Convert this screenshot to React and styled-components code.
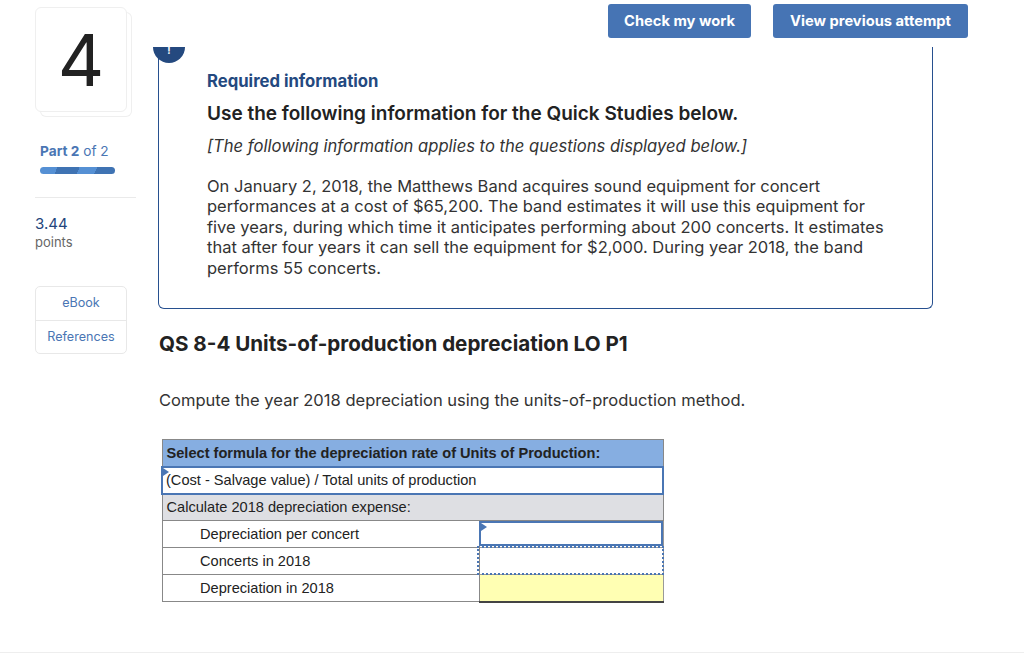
import React from "react";
import styled, { createGlobalStyle } from "styled-components";

const GlobalStyle = createGlobalStyle`
  html, body {
    margin: 0;
    padding: 0;
    background: #fff;
    overflow: hidden;
  }
  body {
    font-family: Inter, "Open Sans", sans-serif;
    color: #2b2b2b;
  }
`;

const Page = styled.div`
  display: flex;
  height: 653px;
  width: 1024px;
  box-sizing: border-box;
  border-bottom: 1px solid #eeeeee;
`;

const Sidebar = styled.aside`
  width: 101px;
  margin-left: 35px;
  padding-top: 7px;
  flex-shrink: 0;
`;

const NumberCard = styled.div`
  width: 92px;
  height: 105px;
  box-sizing: border-box;
  border: 1px solid #efefef;
  border-radius: 6px;
  background: #fff;
  display: flex;
  justify-content: center;
  font-size: 72px;
  line-height: 103px;
  font-weight: 400;
  color: #222;
  box-shadow: 5px 5px 0 -1px #fff, 5px 5px 0 0 #efefef;
`;

const PartLabel = styled.div`
  margin: 30px 0 0 5px;
  font-size: 13.7px;
  line-height: 18px;
  color: #4a76b4;
  b {
    font-weight: 700;
  }
`;

const Progress = styled.div`
  margin: 7px 0 0 5px;
  width: 75px;
  height: 7px;
  border-radius: 4px;
  background: repeating-linear-gradient(
    115deg,
    #5590d4 0 16px,
    #3f73b3 16px 36px
  );
`;

const Divider = styled.hr`
  margin: 23px 0 0;
  border: 0;
  border-top: 1px solid #eaeaea;
`;

const Score = styled.div`
  margin-top: 17px;
  font-size: 15px;
  line-height: 18px;
  color: #24457c;
`;

const ScoreLabel = styled.div`
  font-size: 13px;
  line-height: 18px;
  color: #666;
`;

const ToolGroup = styled.div`
  margin-top: 35px;
  width: 92px;
  box-sizing: border-box;
  border: 1px solid #e8e8e8;
  border-radius: 5px;
`;

const ToolLink = styled.div`
  height: 33px;
  box-sizing: border-box;
  line-height: 32px;
  text-align: center;
  font-size: 12.6px;
  color: #4a76b4;
  & + & {
    border-top: 1px solid #e8e8e8;
  }
`;

const Main = styled.main`
  margin-left: 22px;
  width: 810px;
  flex-shrink: 0;
`;

const Actions = styled.div`
  display: flex;
  justify-content: flex-end;
  gap: 22px;
  padding-top: 4px;
  height: 47px;
  box-sizing: border-box;
`;

const ActionButton = styled.button`
  height: 34px;
  width: ${(props) => props.$w}px;
  border: 0;
  border-radius: 3px;
  background: #4674b4;
  color: #fff;
  font-family: inherit;
  font-size: 14.7px;
  font-weight: 700;
  padding: 0;
`;

const InfoCard = styled.section`
  position: relative;
  width: 775px;
  height: 262px;
  box-sizing: border-box;
  border: 1px solid #27508f;
  border-top: 0;
  border-radius: 0 0 6px 6px;
  padding: 22px 40px 0 48px;
`;

const InfoBadge = styled.div`
  position: absolute;
  left: -6px;
  top: 0;
  width: 32px;
  height: 16px;
  border-radius: 0 0 16px 16px;
  background: #24497f;
  color: #fff;
  font-size: 10px;
  font-weight: 700;
  line-height: 6px;
  text-align: center;
`;

const RequiredTitle = styled.h3`
  margin: 0;
  font-size: 16.7px;
  line-height: 24px;
  font-weight: 700;
  color: #24497f;
`;

const Lead = styled.p`
  margin: 9px 0 0;
  font-size: 19px;
  line-height: 24px;
  font-weight: 600;
  color: #222;
`;

const Note = styled.p`
  margin: 8px 0 0;
  font-size: 16.6px;
  line-height: 24px;
  font-style: italic;
  color: #333;
`;

const Body = styled.p`
  margin: 18px 0 0;
  font-size: 16.5px;
  line-height: 20.4px;
  color: #333;
`;

const QuestionTitle = styled.h2`
  margin: 21px 0 0 1px;
  font-size: 20.6px;
  line-height: 28px;
  font-weight: 700;
  color: #222;
`;

const Prompt = styled.p`
  margin: 30px 0 0 1px;
  font-size: 16.55px;
  line-height: 24px;
  color: #333;
`;

const Sheet = styled.table`
  margin: 27px 0 0 3px;
  width: 503px;
  border-collapse: collapse;
  table-layout: fixed;
  font-family: "Liberation Sans", Arial, sans-serif;
  font-size: 14.6px;
  color: #222;
  tr {
    height: 27px;
  }
`;

const HeadCell = styled.td`
  box-sizing: border-box;
  padding: 0 4px;
  border: 1px solid #888;
  background: #86aee1;
  font-weight: 700;
`;

const GreyCell = styled.td`
  box-sizing: border-box;
  padding: 0 4px;
  border: 1px solid #888;
  background: #dedfe3;
`;

const LabelCell = styled.td`
  box-sizing: border-box;
  padding: 0 0 0 37.5px;
  border: 1px solid #888;
`;

const FormulaCell = styled.td`
  position: relative;
  box-sizing: border-box;
  padding: 0 3px;
  border: 2px solid #4a76b4;
  background: #fff;
`;

const InputCell = styled.td`
  position: relative;
  box-sizing: border-box;
  padding: 0;
  border: 1px solid #999;
  background: #fff;
`;

const SolidField = styled.div`
  position: absolute;
  inset: 0 0 1px -1px;
  box-sizing: border-box;
  border: 2px solid #4a76b4;
`;

const DottedField = styled.div`
  position: absolute;
  inset: -2px -1px -1px -3px;
  box-sizing: border-box;
  border: 2px dotted #4a76b4;
`;

const TotalCell = styled.td`
  box-sizing: border-box;
  padding: 0;
  border: 1px solid #999;
  border-bottom: 2px solid #444;
  background: #ffffb3;
`;

const Flag = styled.span`
  position: absolute;
  left: 0;
  top: 0;
  width: 0;
  height: 0;
  border-top: 4px solid transparent;
  border-bottom: 4px solid transparent;
  border-left: 6px solid #4a76b4;
`;

export default function App() {
  return (
    <>
      <GlobalStyle />
      <Page>
        <Sidebar>
          <NumberCard>4</NumberCard>
          <PartLabel>
            <b>Part 2</b> of 2
          </PartLabel>
          <Progress />
          <Divider />
          <Score>3.44</Score>
          <ScoreLabel>points</ScoreLabel>
          <ToolGroup>
            <ToolLink>eBook</ToolLink>
            <ToolLink>References</ToolLink>
          </ToolGroup>
        </Sidebar>
        <Main>
          <Actions>
            <ActionButton $w={143}>Check my work</ActionButton>
            <ActionButton $w={195}>View previous attempt</ActionButton>
          </Actions>
          <InfoCard>
            <InfoBadge>!</InfoBadge>
            <RequiredTitle>Required information</RequiredTitle>
            <Lead>Use the following information for the Quick Studies below.</Lead>
            <Note>[The following information applies to the questions displayed below.]</Note>
            <Body>
              On January 2, 2018, the Matthews Band acquires sound equipment for concert
              <br />
              performances at a cost of $65,200. The band estimates it will use this equipment for
              <br />
              five years, during which time it anticipates performing about 200 concerts. It estimates
              <br />
              that after four years it can sell the equipment for $2,000. During year 2018, the band
              <br />
              performs 55 concerts.
            </Body>
          </InfoCard>
          <QuestionTitle>QS 8-4 Units-of-production depreciation LO P1</QuestionTitle>
          <Prompt>Compute the year 2018 depreciation using the units-of-production method.</Prompt>
          <Sheet>
            <colgroup>
              <col style={{ width: 317 }} />
              <col />
            </colgroup>
            <tbody>
              <tr>
                <HeadCell colSpan={2}>Select formula for the depreciation rate of Units of Production:</HeadCell>
              </tr>
              <tr>
                <FormulaCell colSpan={2}>
                  <Flag />
                  (Cost - Salvage value) / Total units of production
                </FormulaCell>
              </tr>
              <tr>
                <GreyCell colSpan={2}>Calculate 2018 depreciation expense:</GreyCell>
              </tr>
              <tr>
                <LabelCell>Depreciation per concert</LabelCell>
                <InputCell>
                  <SolidField>
                    <Flag />
                  </SolidField>
                </InputCell>
              </tr>
              <tr>
                <LabelCell>Concerts in 2018</LabelCell>
                <InputCell>
                  <DottedField />
                </InputCell>
              </tr>
              <tr>
                <LabelCell>Depreciation in 2018</LabelCell>
                <TotalCell />
              </tr>
            </tbody>
          </Sheet>
        </Main>
      </Page>
    </>
  );
}
